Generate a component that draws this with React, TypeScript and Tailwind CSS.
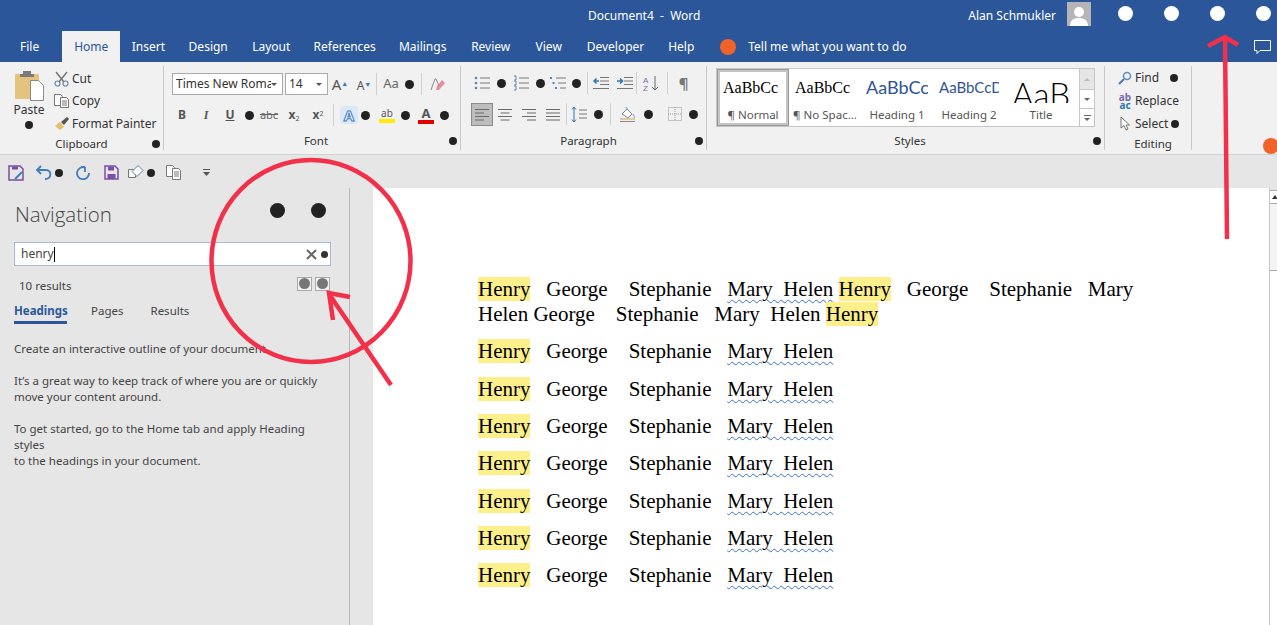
import React from 'react';

const ui = { fontFamily: '"Noto Sans", "Open Sans", sans-serif' };
const names = [
  ['Insert', 56.5], ['Design', 63], ['Layout', 63], ['References', 84], ['Mailings', 72],
  ['Review', 64], ['View', 52], ['Developer', 81.5], ['Help', 50],
] as const;

function Dot({ className = 'w-[9px] h-[9px] bg-[#222]' }: { className?: string }) {
  return <span className={`block rounded-full shrink-0 ${className}`} />;
}

function Slot({ w, children }: { w: number; children?: React.ReactNode }) {
  return (
    <div className="flex items-center justify-center h-6 shrink-0" style={{ width: w }}>
      {children}
    </div>
  );
}

function Sep() {
  return <div className="w-px h-[22px] bg-[#d0d0d0] shrink-0" />;
}

function GroupLabel({ label, dot = true }: { label: string; dot?: boolean }) {
  return (
    <div className="mt-auto h-[18px] flex items-center relative">
      <span className="flex-1 text-center text-[11.5px] text-[#333]">{label}</span>
      {dot && <Dot className="w-[8px] h-[8px] bg-[#222] absolute right-[3px] top-[5px]" />}
    </div>
  );
}

function Lines({ kind }: { kind: 'l' | 'c' | 'r' | 'j' }) {
  const rows = [0, 1, 2, 3].map((i) => {
    const short = i % 2 === 1;
    const len = kind === 'j' ? 14 : short ? 9 : 14;
    const x = kind === 'l' || kind === 'j' ? 1 : kind === 'r' ? 15 - len : 8 - len / 2;
    return <path key={i} d={`M${x} ${2.5 + i * 3.5}h${len}`} />;
  });
  return <svg width="16" height="15" fill="none" stroke="#6b6b6b">{rows}</svg>;
}

function ListIcon({ kind }: { kind: 'b' | 'n' | 'm' }) {
  return (
    <svg width="16" height="16" fill="none">
      {[3, 8, 13].map((y, i) => (
        <g key={y}>
          {kind === 'b' && <circle cx="2" cy={y} r="1.3" fill="#5b86b5" />}
          {kind === 'n' && <path d={`M1 ${y - 2}h2v4h-2`} stroke="#5b86b5" />}
          {kind === 'm' && <rect x={i * 2.5} y={y - 1} width="2" height="2" fill="#5b86b5" />}
          <path d={`M${kind === 'm' ? 6 + i * 2 : 6} ${y}H16`} stroke="#777" />
        </g>
      ))}
    </svg>
  );
}

function Indent({ dir }: { dir: 1 | -1 }) {
  return (
    <svg width="17" height="14" fill="none">
      <path d="M8 1.5h9M8 5h9M8 8.500h9M1 12.500h16" stroke="#777" />
      <path d={dir === 1 ? 'M1 5h5M4 2.500 6.500 5 4 7.500' : 'M7 5H2M4.500 2.500 2 5l2.500 2.500'} stroke="#2f74b5" strokeWidth="1.500" />
    </svg>
  );
}

function Clipboard() {
  return (
    <div className="w-[164px] shrink-0 border-r border-[#c8c8c8] flex flex-col my-1">
      <div className="flex h-[69px] pt-[2px]">
        <div className="w-[58px] flex flex-col items-center">
          <svg width="30" height="31" className="mt-[2px] ml-[2px]">
            <rect x="0" y="4" width="24" height="25" rx="1" fill="#e6c27f" />
            <path d="M8 4V1h8v3h3v3H5V4z" fill="#7b7b7b" />
            <path d="M15.500 10.500h8l5 5v15h-13z" fill="#fff" stroke="#8a8a8a" />
          </svg>
          <span className="text-[12px] leading-4 mt-[1px] text-[#333]">Paste</span>
          <Dot className="w-[8px] h-[8px] bg-[#222] mt-[3px]" />
        </div>
        <div className="flex flex-col text-[12px] text-[#333] -ml-[4px]">
          {[
            ['Cut', <svg key="c" width="15" height="16" fill="none" stroke="#6d89a8" strokeWidth="1.200"><circle cx="3.500" cy="12.500" r="2.500" /><circle cx="11.500" cy="12.500" r="2.500" /><path d="M2 1l8 10M13 1L5 11" stroke="#777" strokeWidth="1.500" /></svg>],
            ['Copy', <svg key="p" width="15" height="14" fill="#fff" stroke="#777"><path d="M.5.500h6l2 2v9H.5z" /><path d="M6.500 3.500h6l2 2v8h-8z" /><path d="M8 7h5M8 9h5M8 11h5" /></svg>],
            ['Format Painter', <svg key="f" width="16" height="15" fill="none"><path d="M1 10l5-4 4 5-4 3z" fill="#e3c06f" /><path d="M7 6l6-5 2 2-5 6z" fill="#555" /></svg>],
          ].map(([label, icon]) => (
            <div key={label as string} className="h-[23px] flex items-center gap-[3px] whitespace-nowrap">
              <span className="w-[15px] flex justify-center">{icon}</span>
              <span>{label}</span>
            </div>
          ))}
        </div>
      </div>
      <GroupLabel label="Clipboard" />
    </div>
  );
}

function Font() {
  return (
    <div className="w-[297px] shrink-0 border-r border-[#c8c8c8] flex flex-col my-1 pl-2">
      <div className="flex items-center h-[22px] mt-[7px]">
        <div className="w-[111px] h-[22px] bg-white border border-[#ababab] flex items-center justify-between pl-[3px] pr-[5px] text-[12px] text-[#333]">
          <span className="whitespace-nowrap overflow-hidden">Times New Roma</span>
          <span className="w-0 h-0 border-x-[3px] border-x-transparent border-t-[3px] border-t-[#555] shrink-0" />
        </div>
        <div className="w-[43px] h-[22px] bg-white border border-[#ababab] flex items-center justify-between pl-[3px] pr-[5px] ml-[2px] text-[12px] text-[#333]">
          <span>14</span>
          <span className="w-0 h-0 border-x-[3px] border-x-transparent border-t-[3px] border-t-[#555]" />
        </div>
        <Slot w={24}><span className="text-[15px] text-[#555]">A<sup className="text-[7px] text-[#3c78b5]">▲</sup></span></Slot>
        <Slot w={24}><span className="text-[12px] text-[#555] mt-1">A<sup className="text-[7px] text-[#3c78b5]">▼</sup></span></Slot>
        <Sep />
        <Slot w={28}><span className="text-[13px] text-[#666]">Aa</span></Slot>
        <Slot w={8}><Dot /></Slot>
        <div className="w-[8px]" />
        <Sep />
        <Slot w={30}>
          <svg width="16" height="15"><path d="M8 9l5-6 3 3-6 7H7z" fill="#e88d9c" /><path d="M2 13 6 2h1l3 7" fill="none" stroke="#8a8a8a" /></svg>
        </Slot>
      </div>
      <div className="flex items-center mt-[8px] -ml-[2px]">
        <Slot w={24}><span className="font-bold text-[12px] text-[#555]">B</span></Slot>
        <Slot w={24}><span className="italic text-[12px] text-[#555] [font-family:'Liberation_Serif',serif] font-bold">I</span></Slot>
        <Slot w={24}><span className="font-bold underline text-[12px] text-[#555]">U</span></Slot>
        <Slot w={14}><Dot /></Slot>
        <Slot w={26}><span className="text-[11px] text-[#666] line-through">abc</span></Slot>
        <Slot w={24}><span className="font-bold text-[12px] text-[#555]">x<sub className="text-[7px] font-normal">2</sub></span></Slot>
        <Slot w={24}><span className="font-bold text-[12px] text-[#555]">x<sup className="text-[7px] font-normal">2</sup></span></Slot>
        <div className="w-[3px]" />
        <Sep />
        <Slot w={30}><span className="w-[18px] h-[18px] flex items-center justify-center bg-[#dbe8f5] rounded text-[15px] font-bold text-white [-webkit-text-stroke:1px_#3f7cc0]">A</span></Slot>
        <Slot w={2}><Dot /></Slot>
        <div className="w-[12px]" />
        <Slot w={18}>
          <span className="flex flex-col items-center leading-none text-[10px] text-[#555]">ab<span className="block w-4 h-1 bg-[#ffeb00] mt-[1px]" /></span>
        </Slot>
        <Slot w={18}><Dot /></Slot>
        <Slot w={24}>
          <span className="flex flex-col items-center leading-none text-[13px] font-bold text-[#555]">A<span className="block w-4 h-1 bg-[#e00000]" /></span>
        </Slot>
        <Slot w={12}><Dot /></Slot>
      </div>
      <GroupLabel label="Font" />
    </div>
  );
}

function Paragraph() {
  return (
    <div className="w-[246px] shrink-0 border-r border-[#c8c8c8] flex flex-col my-1 pl-[10px]">
      <div className="flex items-center mt-[5px]">
        <Slot w={22}><ListIcon kind="b" /></Slot>
        <Slot w={16}><Dot /></Slot>
        <Slot w={24}><ListIcon kind="n" /></Slot>
        <Slot w={14}><Dot /></Slot>
        <Slot w={22}><ListIcon kind="m" /></Slot>
        <Slot w={14}><Dot /></Slot>
        <div className="w-[4px]" />
        <Sep />
        <Slot w={24}><Indent dir={-1} /></Slot>
        <Slot w={24}><Indent dir={1} /></Slot>
        <Sep />
        <Slot w={30}>
          <svg width="18" height="17" fill="none"><text x="0" y="7.500" fontSize="8" fill="#7a68b3" fontFamily="Liberation Sans">A</text><text x="0" y="16" fontSize="8" fill="#7a68b3" fontFamily="Liberation Sans">Z</text><path d="M12 1v14M9 12l3 3 3-3" stroke="#666" /></svg>
        </Slot>
        <Sep />
        <Slot w={31}><span className="text-[15px] font-bold text-[#777]">¶</span></Slot>
      </div>
      <div className="flex items-center mt-[7px]">
        <div className="w-[22px] h-[23px] bg-[#bdbdbd] border border-[#8c8c8c] flex items-center justify-center shrink-0"><Lines kind="l" /></div>
        <Slot w={24}><Lines kind="c" /></Slot>
        <Slot w={24}><Lines kind="r" /></Slot>
        <Slot w={24}><Lines kind="j" /></Slot>
        <div className="w-[1px]" />
        <Sep />
        <Slot w={24}>
          <svg width="16" height="17" fill="none"><path d="M3 1v15M1 3.500 3 1l2 2.500M1 13.500 3 16l2-2.500" stroke="#2f74b5" /><path d="M8 4h8M8 8h8M8 12h8" stroke="#777" /></svg>
        </Slot>
        <Slot w={14}><Dot /></Slot>
        <div className="w-[5px]" />
        <Sep />
        <Slot w={32}>
          <svg width="17" height="16" fill="none"><path d="M3 8l5-5 5 5-4 4z" stroke="#888" fill="#fff" /><path d="M7 1l2 3M14 8c1 2 2 3 1 4" stroke="#6a9ac9" /><path d="M1 15.500h15" stroke="#888" /><path d="M1 13h15" stroke="#c9a35c" /></svg>
        </Slot>
        <Slot w={10}><Dot /></Slot>
        <div className="w-[10px]" />
        <Slot w={24}>
          <svg width="14" height="14" fill="none" stroke="#999" strokeDasharray="1 1"><rect x=".5" y=".5" width="13" height="13" /><path d="M7 0v14M0 7h14" /></svg>
        </Slot>
        <Slot w={12}><Dot /></Slot>
      </div>
      <GroupLabel label="Paragraph" />
    </div>
  );
}

function StyleItem({ preview, label, selected }: { preview: React.ReactNode; label: string; selected?: boolean }) {
  return (
    <div className={`w-[72px] shrink-0 h-full flex flex-col items-center overflow-hidden ${selected ? 'border-[3px] border-[#c4c4c4] outline outline-1 outline-[#999] -outline-offset-1' : 'border-[3px] border-transparent'}`}>
      <div className="h-[33px] w-full flex items-center justify-center overflow-hidden whitespace-nowrap">{preview}</div>
      <span className="text-[11.5px] leading-4 mt-[4px] text-[#555] whitespace-nowrap">{label}</span>
    </div>
  );
}

function Styles() {
  const serif = 'text-[16px] text-black [font-family:"Liberation_Serif",serif] w-[64px] overflow-hidden pl-[2px]';
  const light = '[font-family:Lato,sans-serif] text-[#2f5496] overflow-hidden';
  return (
    <div className="w-[398px] shrink-0 border-r border-[#c8c8c8] flex flex-col my-1 pl-[9px]">
      <div className="w-[379px] h-[59px] mt-[2px] bg-white border border-[#c6c6c6] flex">
        <div className="flex h-full -ml-[0px] flex-1 py-0">
          <StyleItem selected label="¶ Normal" preview={<div className={serif}>AaBbCc</div>} />
          <StyleItem label="¶ No Spac..." preview={<div className={serif}>AaBbCc</div>} />
          <StyleItem label="Heading 1" preview={<div className={`${light} text-[18px] w-[62px]`}>AaBbCc</div>} />
          <StyleItem label="Heading 2" preview={<div className={`${light} text-[15px] w-[60px]`}>AaBbCcD</div>} />
          <StyleItem label="Title" preview={<div className="[font-family:Lato,sans-serif] font-light text-[33px] leading-[33px] text-black h-[22px] mt-[8px] overflow-hidden flex items-start"><span className="-mt-[3px]">AaB</span></div>} />
        </div>
        <div className="w-[15px] border-l border-[#c6c6c6] flex flex-col shrink-0">
          <div className="h-[21px] bg-[#e6e6e6] border-b border-[#c6c6c6] flex items-center justify-center"><span className="w-0 h-0 border-x-[3px] border-x-transparent border-b-[3px] border-b-[#bbb]" /></div>
          <div className="h-[19px] border-b border-[#c6c6c6] flex items-center justify-center"><span className="w-0 h-0 border-x-[3px] border-x-transparent border-t-[3px] border-t-[#666]" /></div>
          <div className="flex-1 flex flex-col items-center justify-center gap-[2px]"><span className="w-[7px] h-px bg-[#666]" /><span className="w-0 h-0 border-x-[3px] border-x-transparent border-t-[3px] border-t-[#666]" /></div>
        </div>
      </div>
      <GroupLabel label="Styles" />
    </div>
  );
}

function Editing() {
  return (
    <div className="w-[87px] shrink-0 border-r border-[#c8c8c8] flex flex-col my-1 pl-[10px]">
      <div className="flex flex-col pt-[-2px] text-[12px] text-[#333]">
        <div className="h-[23px] flex items-center whitespace-nowrap">
          <span className="w-[20px] flex justify-center">
            <svg width="14" height="14" fill="none"><circle cx="9" cy="5" r="3.500" stroke="#5b8cc0" strokeWidth="1.500" /><path d="M6 8l-5 5" stroke="#4a7bb0" strokeWidth="2" /></svg>
          </span>
          <span>Find</span>
          <Dot className="w-2 h-2 bg-[#222] ml-[11px]" />
        </div>
        <div className="h-[23px] flex items-center whitespace-nowrap">
          <span className="w-[20px] text-[10px] leading-[8px] font-bold text-center text-[#7a68b3]">ab<br /><span className="text-[#2f74b5]">ac</span></span>
          <span>Replace</span>
        </div>
        <div className="h-[23px] flex items-center whitespace-nowrap">
          <span className="w-[20px] flex justify-center">
            <svg width="10" height="15" fill="#fff" stroke="#777"><path d="M1 1v11l3-2.500 2 4.500 2-1-2-4h3.500z" /></svg>
          </span>
          <span>Select</span>
          <Dot className="w-2 h-2 bg-[#222] ml-[3px]" />
        </div>
      </div>
      <GroupLabel label="Editing" dot={false} />
    </div>
  );
}

function Header() {
  return (
    <header className="bg-[#2b579a] text-white h-[62px] flex flex-col shrink-0">
      <div className="h-[31px] flex items-center text-[12px]">
        <span className="ml-[588px] whitespace-nowrap">Document4&nbsp; -&nbsp; Word</span>
        <span className="ml-auto whitespace-nowrap">Alan Schmukler</span>
        <div className="w-[24px] h-[24px] ml-[11px] -mt-[4px] bg-[#b5b5b5] flex items-end justify-center overflow-hidden">
          <svg width="20" height="22" fill="#fff"><circle cx="10" cy="8" r="5" /><path d="M1 22c0-6 4-8 9-8s9 2 9 8z" /></svg>
        </div>
        <div className="flex gap-[31px] ml-[27px] mr-[6px] -mt-[5px]">
          {[0, 1, 2, 3].map((i) => <Dot key={i} className="w-[15px] h-[15px] bg-white" />)}
        </div>
      </div>
      <nav className="flex h-[31px] text-[12px] items-stretch">
        <span className="ml-[20px] mr-[23px] flex items-center">File</span>
        <span className="w-[58px] bg-[#f1f1f1] text-[#2b579a] flex items-center justify-center">Home</span>
        {names.map(([label, w]) => (
          <span key={label} className="flex items-center justify-center" style={{ width: w }}>{label}</span>
        ))}
        <Dot className="w-4 h-4 bg-[#f0622a] ml-[14px] self-center" />
        <span className="ml-[12px] flex items-center whitespace-nowrap">Tell me what you want to do</span>
        <svg width="17" height="14" fill="none" stroke="#fff" className="ml-auto mr-[6px] self-center">
          <path d="M.5.500h16v10H6l-3 3v-3H.5z" />
        </svg>
      </nav>
    </header>
  );
}

function Qat() {
  return (
    <div className="h-[34px] bg-[#e6e6e6] border-t border-[#d2d2d2] flex items-center pl-[8px] shrink-0 pt-[2px]">
      <svg width="16" height="16" fill="none"><path d="M1 1h11l3 3v11H1z" stroke="#7b4fa6" strokeWidth="1.500" /><path d="M4 1.500h6v3H4z" fill="#7b4fa6" /><path d="M7 14l7-7" stroke="#3f7cc0" strokeWidth="2" /></svg>
      <div className="w-[12px]" />
      <svg width="16" height="15" fill="none" stroke="#3f7cc0" strokeWidth="1.800"><path d="M5 1L1 5l4 4M1 5h9c6 0 6 9-1 9" /></svg>
      <Dot className="w-2 h-2 bg-[#222] ml-[3px]" />
      <div className="w-[13px]" />
      <svg width="14" height="15" fill="none" stroke="#3f7cc0" strokeWidth="1.800"><path d="M9 1.500A6 6 0 1 0 13 7M9 1v5M9 1H5" transform="translate(0 1)" /></svg>
      <div className="w-[14px]" />
      <svg width="15" height="15" fill="none"><path d="M1 1h10l3 3v10H1z" stroke="#7b4fa6" strokeWidth="1.500" /><path d="M4 1.500h6v4H4zM3.500 9h8v5h-8z" fill="#7b4fa6" /></svg>
      <div className="w-[9px]" />
      <svg width="16" height="15" fill="#fff" stroke="#5a7fa8"><path d="M.5 4.500h7v8h-7z" stroke="#777" /><path d="M10 .5l5 5-6 6-5-5z" /></svg>
      <Dot className="w-2 h-2 bg-[#222] ml-[3px]" />
      <div className="w-[11px]" />
      <svg width="15" height="15" fill="#fff" stroke="#777"><path d="M.5.500h6l2 2v9H.5z" /><path d="M6.500 3.500h6l2 2v9h-8z" /><path d="M8 7h5M8 9h5M8 11h5" /></svg>
      <div className="w-[22px]" />
      <svg width="7" height="8" fill="#555"><rect y="0" width="7" height="1" /><path d="M0 3h7L3.500 7z" /></svg>
    </div>
  );
}

function NavPane() {
  return (
    <aside className="w-[350px] shrink-0 border-r border-[#b8b8b8] bg-[#e6e6e6] flex flex-col pl-[14px] pr-[18px] text-[#444]">
      <div className="flex items-center h-[54px] pb-[2px]">
        <span className="text-[20.5px] font-light text-[#444] pl-[1px] [font-family:'Open_Sans',sans-serif]">Navigation</span>
        <Dot className="w-[15px] h-[15px] bg-[#222] ml-auto -mt-[8px]" />
        <Dot className="w-[15px] h-[15px] bg-[#222] ml-[26px] mr-[5px] -mt-[8px]" />
      </div>
      <div className="h-[24px] bg-white border border-[#a9b8d5] flex items-center pl-[6px] pr-[2px] text-[12px] text-[#444]">
        <span>henry</span>
        <span className="w-px h-[15px] bg-black" />
        <svg width="11" height="11" stroke="#666" strokeWidth="2" className="ml-auto"><path d="M1 1l9 9M10 1l-9 9" /></svg>
        <Dot className="w-[7px] h-[7px] bg-[#333] ml-[4px]" />
      </div>
      <div className="flex items-center h-[24px] mt-[8px] text-[11.5px] pl-[5px]">
        <span>10 results</span>
        <div className="ml-auto flex gap-[3px] mr-[1px] -mt-[5px]">
          {[0, 1].map((i) => (
            <div key={i} className="w-[15px] h-[14px] border border-[#aaa] bg-[#f2f2f2] flex items-center justify-center">
              <Dot className="w-[11px] h-[11px] bg-[#777]" />
            </div>
          ))}
        </div>
      </div>
      <div className="flex text-[11.5px] h-[22px] mt-[4px]">
        <span className="w-[53px] text-center font-bold text-[#2b579a] border-b-[3px] border-[#2b579a] whitespace-nowrap">Headings</span>
        <span className="ml-[24px]">Pages</span>
        <span className="ml-[27px]">Results</span>
      </div>
      <div className="mt-[17px] text-[11.5px] leading-[16px] text-[#444]">
        <p>Create an interactive outline of your document.</p>
        <p className="mt-4">It&rsquo;s a great way to keep track of where you are or quickly<br />move your content around.</p>
        <p className="mt-4">To get started, go to the Home tab and apply Heading styles<br />to the headings in your document.</p>
      </div>
    </aside>
  );
}

function Hit({ children }: { children: React.ReactNode }) {
  return <span className="bg-[#fdf08a]">{children}</span>;
}

function Squiggle() {
  return <span className="underline decoration-wavy decoration-[#3d6fc9] decoration-1 underline-offset-[3px]">Mary  Helen</span>;
}

function Doc() {
  return (
    <main className="flex-1 bg-white relative overflow-hidden">
      <div className="pl-[105px] pt-[89px] w-[800px] text-[21px] leading-[25px] text-black whitespace-pre-wrap [font-family:'Liberation_Serif',serif]">
        <p className="mb-[12.33px]">
          <Hit>Henry</Hit>{'   George    Stephanie   '}<Squiggle />{' '}<Hit>Henry</Hit>{'   George    Stephanie   Mary  Helen George    Stephanie   Mary  Helen '}<Hit>Henry</Hit>
        </p>
        {[0, 1, 2, 3, 4, 5, 6].map((i) => (
          <p key={i} className="mb-[12.33px]">
            <Hit>Henry</Hit>{'   George    Stephanie   '}<Squiggle />
          </p>
        ))}
      </div>
    </main>
  );
}

function Scrollbar() {
  return (
    <div className="w-[8px] bg-[#e6e6e6] border-l border-[#c6c6c6] flex flex-col shrink-0 pt-[2px]">
      <div className="h-[14px] bg-white border-y border-[#aaa] flex items-center pl-[2px]">
        <span className="w-0 h-0 border-x-[3px] border-x-transparent border-b-[4px] border-b-[#333]" />
      </div>
      <div className="h-[66px] bg-[#f4f4f4]" />
      <div className="flex-1 bg-white border-t border-[#aaa]" />
    </div>
  );
}

// red marks somebody drew on top of the screenshot
function Annotations() {
  return (
    <svg width="1277" height="625" fill="none" stroke="#f2304a" strokeWidth="4.500" className="absolute left-0 top-0 pointer-events-none">
      <ellipse cx="311" cy="261" rx="99.500" ry="101" />
      <path d="M391 385 329 294M350 297 329 293 333 320" />
      <path d="M1227 239 1225 38M1208 46 1225 37 1238 45" />
    </svg>
  );
}

export default function App() {
  return (
    <div className="w-[1277px] h-[625px] relative overflow-hidden flex flex-col bg-[#e6e6e6]" style={ui}>
      <Header />
      <div className="h-[92px] bg-[#f1f1f1] flex shrink-0">
        <Clipboard />
        <Font />
        <Paragraph />
        <Styles />
        <Editing />
      </div>
      <Qat />
      <div className="flex-1 flex min-h-0">
        <NavPane />
        <div className="w-[23px] shrink-0" />
        <Doc />
        <Scrollbar />
      </div>
      <Dot className="absolute w-4 h-4 bg-[#f0622a] left-[1263px] top-[138px]" />
      <Annotations />
    </div>
  );
}
